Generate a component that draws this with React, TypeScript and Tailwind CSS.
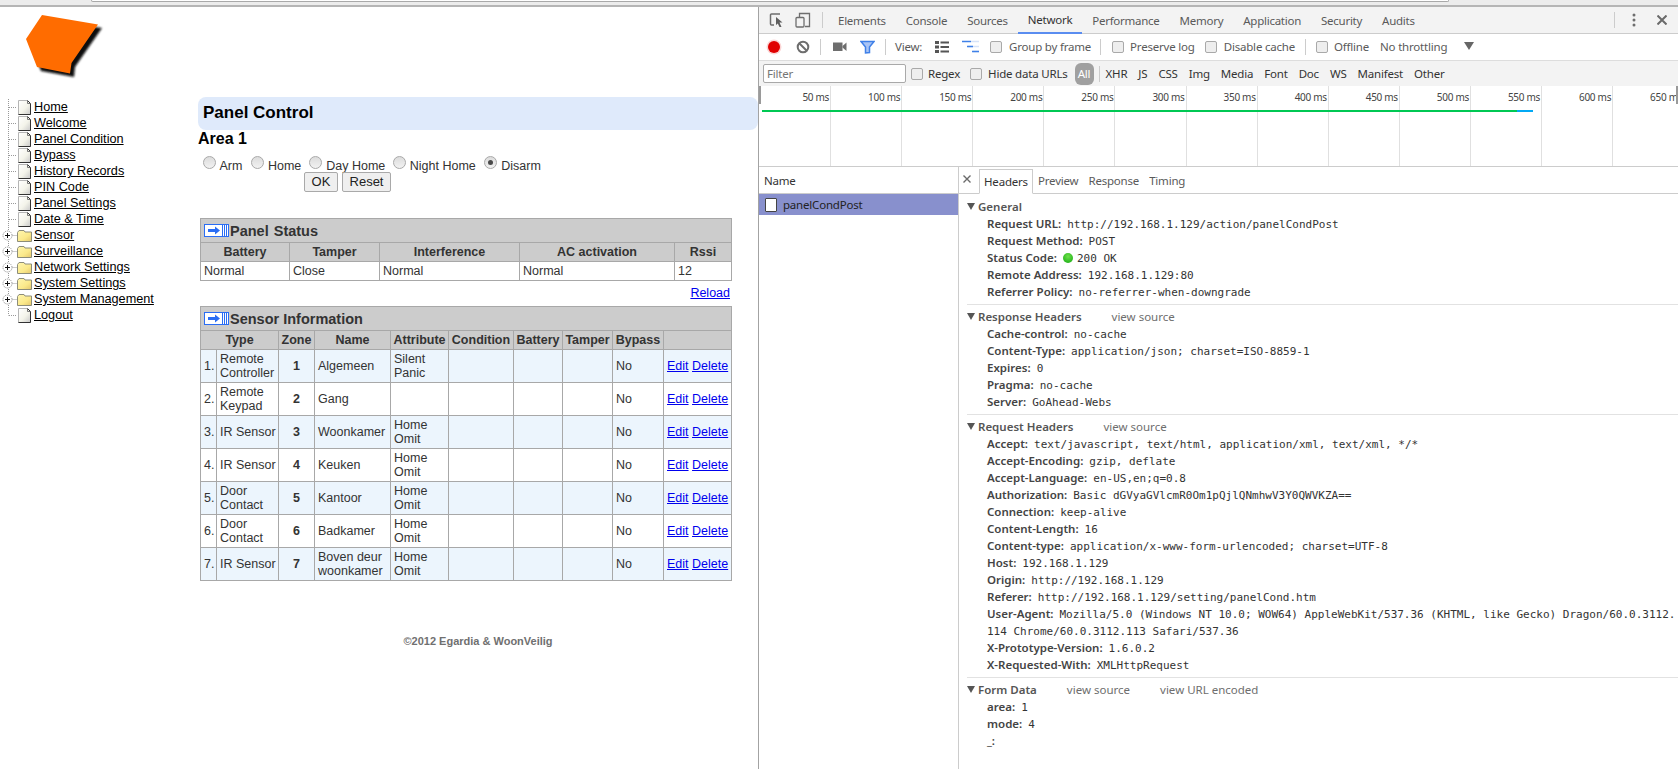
import type { ReactNode } from 'react';

const navItems = [
  { label: 'Home', type: 'page' },
  { label: 'Welcome', type: 'page' },
  { label: 'Panel Condition', type: 'page' },
  { label: 'Bypass', type: 'page' },
  { label: 'History Records', type: 'page' },
  { label: 'PIN Code', type: 'page' },
  { label: 'Panel Settings', type: 'page' },
  { label: 'Date & Time', type: 'page' },
  { label: 'Sensor', type: 'folder' },
  { label: 'Surveillance', type: 'folder' },
  { label: 'Network Settings', type: 'folder' },
  { label: 'System Settings', type: 'folder' },
  { label: 'System Management', type: 'folder' },
  { label: 'Logout', type: 'last' },
];

const sensors = [
  { n: '1.', type: ['Remote', 'Controller'], zone: '1', name: ['Algemeen'], attr: ['Silent', 'Panic'] },
  { n: '2.', type: ['Remote', 'Keypad'], zone: '2', name: ['Gang'], attr: [] },
  { n: '3.', type: ['IR Sensor'], zone: '3', name: ['Woonkamer'], attr: ['Home', 'Omit'] },
  { n: '4.', type: ['IR Sensor'], zone: '4', name: ['Keuken'], attr: ['Home', 'Omit'] },
  { n: '5.', type: ['Door', 'Contact'], zone: '5', name: ['Kantoor'], attr: ['Home', 'Omit'] },
  { n: '6.', type: ['Door', 'Contact'], zone: '6', name: ['Badkamer'], attr: ['Home', 'Omit'] },
  { n: '7.', type: ['IR Sensor'], zone: '7', name: ['Boven deur', 'woonkamer'], attr: ['Home', 'Omit'] },
];

const radios = [
  { label: 'Arm', cls: 'ml-[4.5px]' },
  { label: 'Home', cls: 'ml-[8.5px]' },
  { label: 'Day Home', cls: 'ml-[8px]' },
  { label: 'Night Home', cls: 'ml-[7.5px]' },
  { label: 'Disarm', cls: 'ml-[8.5px]', checked: true },
];

const mainTabs = ['Elements', 'Console', 'Sources', 'Network', 'Performance', 'Memory', 'Application', 'Security', 'Audits'];
const typeFilters = ['XHR', 'JS', 'CSS', 'Img', 'Media', 'Font', 'Doc', 'WS', 'Manifest', 'Other'];
const ticks = [50, 100, 150, 200, 250, 300, 350, 400, 450, 500, 550, 600, 650];

function TreeIcon({ type }: { type: string }) {
  return (
    <svg width="34" height="16" viewBox="0 0 34 16" className="shrink-0">
      <defs>
        <linearGradient id="pageFill" x1="0" y1="0" x2="1" y2="1">
          <stop offset="0" stopColor="#ffffff" />
          <stop offset="0.55" stopColor="#f4f4ea" />
          <stop offset="1" stopColor="#c9c9c9" />
        </linearGradient>
        <linearGradient id="folderFill" x1="0" y1="0" x2="1" y2="1">
          <stop offset="0" stopColor="#fff6b0" />
          <stop offset="0.6" stopColor="#fbe98a" />
          <stop offset="1" stopColor="#e3c66e" />
        </linearGradient>
      </defs>
      <path d={type === 'last' ? 'M8.5 0V8.5' : 'M8.5 0V16'} stroke="#999" strokeDasharray="1 1" fill="none" />
      {type === 'folder' ? (
        <>
          <circle cx="7.5" cy="8.5" r="4.5" fill="#fff" stroke="#888" strokeDasharray="1 1" />
          <path d="M5 8.5H10M7.5 6V11" stroke="#111" fill="none" />
          <path d="M12.5 8.5H17" stroke="#999" strokeDasharray="1 1" fill="none" />
          <path d="M17.5 5.5L19 3.5H24L25 5H31.5V14.5H17.5Z" fill="url(#folderFill)" stroke="#8d8d7a" />
        </>
      ) : (
        <>
          <path d="M9 8.5H17" stroke="#999" strokeDasharray="1 1" fill="none" />
          <path d="M18.5 1.5H27.5L30.5 4.5V15.5H18.5Z" fill="url(#pageFill)" stroke="#b5b5b5" />
          <path d="M27.5 1.5L30.5 4.5V15.5H18.5" fill="none" stroke="#333" />
          <path d="M27.5 1.5V4.5H30.5" fill="none" stroke="#777" />
        </>
      )}
    </svg>
  );
}

function ArrowBadge() {
  return (
    <svg width="25" height="14" viewBox="0 0 25 14" className="shrink-0">
      <rect x="0.5" y="0.5" width="24" height="12" fill="#fff" stroke="#2a6df4" />
      <path d="M4 5H11V2.5L16 6.5L11 10.5V8H4Z" fill="#2a6df4" />
      <path d="M18.5 1V12.5M20.5 1V12.5M22.5 1V12.5" stroke="#2a6df4" />
    </svg>
  );
}

function Radio({ checked }: { checked?: boolean }) {
  return (
    <span className="flex h-[13px] w-[13px] shrink-0 -translate-y-[4px] items-center justify-center rounded-full border border-[#a9a9a9] bg-gradient-to-b from-[#dcdcdc] to-[#f2f2f2]">
      {checked && <span className="h-[5px] w-[5px] rounded-full bg-[#4a4a4a]" />}
    </span>
  );
}

function TitleRow({ cols, title }: { cols: number; title: ReactNode }) {
  return (
    <tr className="h-[24px] bg-[#cccccc]">
      <td colSpan={cols} className="border border-[#a8a8a8] pl-[3px]">
        <div className="flex items-center text-[14.5px] font-bold leading-[18px] text-[#333]">
          <ArrowBadge />
          <span className="ml-[1px] whitespace-pre">{title}</span>
        </div>
      </td>
    </tr>
  );
}

function Lines({ items }: { items: string[] }) {
  return (
    <>
      {items.map((line) => (
        <div key={line}>{line}</div>
      ))}
    </>
  );
}

function PagePane() {
  const th = 'border border-[#a8a8a8] text-center font-bold';
  const td = 'border border-[#a8a8a8] pl-[3px] align-middle';

  return (
    <main className="flex w-[758px] shrink-0 flex-col bg-white font-['Liberation_Sans',Arial,sans-serif] text-[12.5px] text-[#333]">
      <div className="h-[90px] pl-[24px] pt-[6px]">
        <svg width="84" height="72" viewBox="24 13 84 72">
          <defs>
            <filter id="logoBlur" x="-20%" y="-20%" width="140%" height="140%">
              <feGaussianBlur stdDeviation="1" />
            </filter>
          </defs>
          <polygon points="46,19 102,28 75,67 74,77 41,71 30,43" fill="#111" filter="url(#logoBlur)" />
          <polygon points="42,15 98,24.5 71.5,63 70,73.5 37,67 26,39" fill="#ff6c00" />
        </svg>
      </div>

      <div className="flex flex-1">
        <nav className="w-[198px] shrink-0 pt-[2px] text-[12.7px] leading-[16px] text-black">
          {navItems.map((item) => (
            <div key={item.label} className="flex h-[16px] items-center whitespace-nowrap">
              <TreeIcon type={item.type} />
              <a className="underline">{item.label}</a>
            </div>
          ))}
        </nav>

        <div className="flex-1">
          <h1 className="h-[33px] rounded-[8px] bg-[#dfeafb] pl-[5px] text-[17px] font-bold leading-[31px] text-black">Panel Control</h1>
          <h2 className="h-[18px] text-[16px] font-bold leading-[17px] text-black">Area 1</h2>

          <div className="flex h-[26px] items-end leading-[16px]">
            {radios.map((r) => (
              <label key={r.label} className={`flex items-center gap-[4px] ${r.cls}`}>
                <Radio checked={r.checked} />
                {r.label}
              </label>
            ))}
          </div>

          <div className="-mt-[2px] flex h-[20px] gap-[4px] pl-[106px]">
            <button className="h-[20px] w-[34px] rounded-[2px] border border-[#a9a9a9] bg-[#efefef] text-[13px] leading-[16px] text-[#222]">OK</button>
            <button className="h-[20px] w-[49px] rounded-[2px] border border-[#a9a9a9] bg-[#efefef] text-[13px] leading-[16px] text-[#222]">Reset</button>
          </div>

          <div className="ml-[2px] mt-[26px] w-[531px]">
            <table className="w-full table-fixed border-collapse leading-[14px]">
              <colgroup>
                <col className="w-[89px]" />
                <col className="w-[90px]" />
                <col className="w-[140px]" />
                <col className="w-[155px]" />
                <col className="w-[57px]" />
              </colgroup>
              <tbody>
                <TitleRow cols={5} title={<span className="[word-spacing:1px]">Panel Status</span>} />
                <tr className="h-[19px] bg-[#cccccc]">
                  {['Battery', 'Tamper', 'Interference', 'AC activation', 'Rssi'].map((h) => (
                    <td key={h} className={th}>{h}</td>
                  ))}
                </tr>
                <tr className="h-[19px] bg-white">
                  {['Normal', 'Close', 'Normal', 'Normal', '12'].map((v, i) => (
                    <td key={i} className={td}>{v}</td>
                  ))}
                </tr>
              </tbody>
            </table>

            <div className="flex h-[25px] items-center justify-end pb-[1px] pr-[1px]">
              <a className="text-[#0000ee] underline">Reload</a>
            </div>

            <table className="w-full table-fixed border-collapse leading-[14px]">
              <colgroup>
                <col className="w-[16px]" />
                <col className="w-[62px]" />
                <col className="w-[36px]" />
                <col className="w-[76px]" />
                <col className="w-[58px]" />
                <col className="w-[65px]" />
                <col className="w-[49px]" />
                <col className="w-[50px]" />
                <col className="w-[51px]" />
                <col className="w-[68px]" />
              </colgroup>
              <tbody>
                <TitleRow cols={10} title="Sensor Information" />
                <tr className="h-[19px] bg-[#cccccc]">
                  <td colSpan={2} className={th}>Type</td>
                  {['Zone', 'Name', 'Attribute', 'Condition', 'Battery', 'Tamper', 'Bypass', ''].map((h) => (
                    <td key={h} className={th}>{h}</td>
                  ))}
                </tr>
                {sensors.map((s, i) => (
                  <tr key={s.n} className={`h-[33px] ${i % 2 === 0 ? 'bg-[#ecf5fd]' : 'bg-white'}`}>
                    <td className={td}>{s.n}</td>
                    <td className={`${td} whitespace-nowrap`}><Lines items={s.type} /></td>
                    <td className="border border-[#a8a8a8] text-center font-bold">{s.zone}</td>
                    <td className={`${td} whitespace-nowrap`}><Lines items={s.name} /></td>
                    <td className={td}><Lines items={s.attr} /></td>
                    <td className={td} />
                    <td className={td} />
                    <td className={td} />
                    <td className={td}>No</td>
                    <td className={`${td} whitespace-nowrap text-[#0000ee]`}>
                      <a className="underline">Edit</a> <a className="underline">Delete</a>
                    </td>
                  </tr>
                ))}
              </tbody>
            </table>

            <p className="mt-[53px] pl-[25px] text-center text-[11px] font-bold leading-[14px] text-[#707070]">©2012 Egardia &amp; WoonVeilig</p>
          </div>
        </div>
      </div>
    </main>
  );
}

function Check({ className = '' }: { className?: string }) {
  return <span className={`h-[12px] w-[12px] shrink-0 rounded-[2px] border border-[#a9a9a9] bg-[#eeeeee] ${className}`} />;
}

function Sep({ className = '' }: { className?: string }) {
  return <span className={`h-[16px] w-px shrink-0 bg-[#cccccc] ${className}`} />;
}

function ToolbarIcon({ width, children, className = '' }: { width: number; children: ReactNode; className?: string }) {
  return (
    <svg width={width} height="16" viewBox={`0 0 ${width} 16`} className={`shrink-0 ${className}`}>
      {children}
    </svg>
  );
}

function TabBar() {
  return (
    <div className="flex h-[27px] shrink-0 items-center border-b border-[#cccccc] bg-[#f3f3f3] pl-[10px] pr-[11px] tracking-[-0.26px]">
      <ToolbarIcon width={14}>
        <path d="M11 2H2.5A1 1 0 0 0 1.500 3V12A1 1 0 0 0 2.500 13H5" fill="none" stroke="#6e6e6e" strokeWidth="1.500" />
        <path d="M7 5L13.500 10.500H10.500L12.500 15H10.500L8.800 11.500L7 13Z" fill="#5f5f5f" />
      </ToolbarIcon>
      <ToolbarIcon width={16} className="ml-[12px]">
        <path d="M4.500 5V1.500H14.500V14.500H10" fill="none" stroke="#6e6e6e" strokeWidth="1.300" />
        <rect x="1" y="5.500" width="8" height="9.500" rx="1" fill="none" stroke="#6e6e6e" strokeWidth="1.300" />
      </ToolbarIcon>
      <Sep className="ml-[11px]" />
      <div className="ml-[5px] flex h-full">
        {mainTabs.map((tab) => (
          <span
            key={tab}
            className={`flex h-[27px] items-center whitespace-nowrap px-[10px] ${tab === 'Network' ? 'border-b-2 border-[#5a8df0] text-[#333]' : 'text-[#5a5a5a]'}`}
          >
            {tab}
          </span>
        ))}
      </div>
      <Sep className="ml-auto" />
      <svg width="4" height="14" viewBox="0 0 4 14" className="ml-[17px]">
        <circle cx="2" cy="2" r="1.500" fill="#6e6e6e" />
        <circle cx="2" cy="7" r="1.500" fill="#6e6e6e" />
        <circle cx="2" cy="12" r="1.500" fill="#6e6e6e" />
      </svg>
      <svg width="10" height="10" viewBox="0 0 10 10" className="ml-[21px]">
        <path d="M0.500 0.500L9.500 9.500M9.500 0.500L0.500 9.500" stroke="#6a6a6a" strokeWidth="2" />
      </svg>
    </div>
  );
}

function ControlBar() {
  return (
    <div className="flex h-[27px] shrink-0 items-center border-b border-[#dddddd] bg-white pl-[7px] text-[#5a5a5a]">
      <ToolbarIcon width={16}>
        <circle cx="8" cy="8" r="7.500" fill="#fbd5d5" />
        <circle cx="8" cy="8" r="6" fill="#e00000" />
      </ToolbarIcon>
      <ToolbarIcon width={14} className="ml-[14px]">
        <circle cx="7" cy="8" r="5.300" fill="none" stroke="#6e6e6e" strokeWidth="2" />
        <path d="M3.500 4.500L10.500 11.500" stroke="#6e6e6e" strokeWidth="2" />
      </ToolbarIcon>
      <Sep className="ml-[10px]" />
      <ToolbarIcon width={14} className="ml-[12px]">
        <rect x="0" y="3.500" width="9.500" height="8.500" fill="#6e6e6e" />
        <path d="M9.500 7L13.500 3.500V12L9.500 8.500Z" fill="#6e6e6e" />
      </ToolbarIcon>
      <ToolbarIcon width={15} className="ml-[13px]">
        <path d="M1 2.500H14L9.500 8V13.500L5.500 14V8Z" fill="#a9c4f5" stroke="#3f80e8" strokeWidth="1.500" />
      </ToolbarIcon>
      <Sep className="ml-[10px]" />
      <span className="ml-[9px] w-[30px] whitespace-nowrap">View:</span>
      <ToolbarIcon width={14} className="ml-[10px]">
        <path d="M0 2H4V5H0ZM0 6.500H4V9.500H0ZM0 11H4V14H0ZM5.500 2.500H14V4.500H5.500ZM5.500 7H14V9H5.500ZM5.500 11.500H14V13.500H5.500Z" fill="#555" />
      </ToolbarIcon>
      <ToolbarIcon width={17} className="ml-[13px]">
        <path d="M0 2.500H9" stroke="#3f80e8" strokeWidth="1.500" />
        <path d="M9 2.500H17M6 7.500H17M11 12.500H17" stroke="#d6e3f8" strokeWidth="1.500" />
        <path d="M5 7.500H11M10 12.500H17" stroke="#3f80e8" strokeWidth="1.500" />
      </ToolbarIcon>
      <Check className="ml-[11px]" />
      <span className="ml-[7px] whitespace-nowrap">Group by frame</span>
      <Sep className="ml-[9px]" />
      <Check className="ml-[11px]" />
      <span className="ml-[6px] whitespace-nowrap">Preserve log</span>
      <Check className="ml-[10px]" />
      <span className="ml-[7px] whitespace-nowrap">Disable cache</span>
      <Sep className="ml-[10px]" />
      <Check className="ml-[10px]" />
      <span className="ml-[6px] whitespace-nowrap">Offline</span>
      <span className="ml-[11px] whitespace-nowrap">No throttling</span>
      <svg width="10" height="8" viewBox="0 0 10 8" className="mb-[3px] ml-[17px]">
        <path d="M0 0H10L5 8Z" fill="#666" />
      </svg>
    </div>
  );
}

function FilterBar() {
  return (
    <div className="flex h-[25px] shrink-0 items-center bg-[#f3f3f3] pl-[4px] text-[#333]">
      <div className="flex h-[19px] w-[143px] shrink-0 items-center rounded-[2px] border border-[#a9a9a9] bg-white pl-[3px] text-[#757575]">Filter</div>
      <Check className="ml-[5px]" />
      <span className="ml-[5px] whitespace-nowrap">Regex</span>
      <Check className="ml-[10px]" />
      <span className="ml-[6px] whitespace-nowrap">Hide data URLs</span>
      <span className="ml-[7px] flex h-[22px] w-[19px] shrink-0 items-center justify-center rounded-[6px] bg-[#a0a0a0] text-white">All</span>
      <Sep className="ml-[5px]" />
      <div className="ml-[6px] flex gap-[11px] whitespace-nowrap">
        {typeFilters.map((f) => (
          <span key={f}>{f}</span>
        ))}
      </div>
    </div>
  );
}

function Timeline() {
  return (
    <div className="relative flex h-[81px] shrink-0 overflow-hidden border-b border-[#cccccc] bg-white pl-[1px] text-[10px] leading-[22px] tracking-[-0.3px] text-[#444]">
      {ticks.map((t) => (
        <div key={t} className="h-full w-[71.1px] shrink-0 border-r border-[#e0e0e0] pr-[1px] text-right whitespace-nowrap">
          {t} ms
        </div>
      ))}
      {/* request bar sits over the grid */}
      <div className="absolute left-[3px] top-[24px] h-[2px] w-[755px] bg-[#00c853]" />
      <div className="absolute left-[758px] top-[24px] h-[2px] w-[16px] bg-[#03a9f4]" />
      <div className="absolute left-0 top-0 h-[18px] w-[2px] bg-[#9a9a9a]" />
      <div className="absolute right-0 top-0 h-[18px] w-[2px] bg-[#9a9a9a]" />
    </div>
  );
}

function Row({ name, children }: { name: string; children: ReactNode }) {
  return (
    <div className="whitespace-nowrap pl-[20px] leading-[17px]">
      <span className="mr-[6px] font-semibold text-[#444]">{name}</span>
      <span className="font-['DejaVu_Sans_Mono',monospace] text-[11px] leading-[14px] text-[#333]">{children}</span>
    </div>
  );
}

function Section({ title, links = [], last, children }: { title: string; links?: string[]; last?: boolean; children: ReactNode }) {
  return (
    <section className={`ml-[8px] pb-[4px] pt-[3px] tracking-normal ${last ? '' : 'border-b border-[#e2e2e2]'}`}>
      <div className="flex h-[17px] items-center whitespace-nowrap">
        <svg width="8" height="7" viewBox="0 0 8 7" className="shrink-0">
          <path d="M0 0H8L4 7Z" fill="#555" />
        </svg>
        <span className="ml-[3px] font-semibold text-[#555]">{title}</span>
        {links.map((l) => (
          <span key={l} className="ml-[30px] text-[#6e6e6e]">{l}</span>
        ))}
      </div>
      {children}
    </section>
  );
}

function Details() {
  return (
    <div className="min-w-0 flex-1 overflow-hidden">
      <div className="flex h-[27px] items-end border-b border-[#cccccc] pl-[4px]">
        <svg width="8" height="8" viewBox="0 0 8 8" className="mb-[10px] shrink-0">
          <path d="M0.500 0.500L7.500 7.500M7.500 0.500L0.500 7.500" stroke="#6a6a6a" strokeWidth="1.400" />
        </svg>
        <span className="-mb-px ml-[8px] flex h-[25px] w-[54px] items-center justify-center border border-b-white border-[#cccccc] bg-white pt-px text-[#333]">Headers</span>
        <div className="ml-[5px] flex h-[25px] items-center gap-[10px] pt-px text-[#5a5a5a]">
          <span>Preview</span>
          <span>Response</span>
          <span>Timing</span>
        </div>
      </div>
      <div className="pt-[1px]">
        <Section title="General">
          <Row name="Request URL:">http://192.168.1.129/action/panelCondPost</Row>
          <Row name="Request Method:">POST</Row>
          <Row name="Status Code:">
            <span className="mr-[4px] inline-block h-[10px] w-[10px] translate-y-[1px] rounded-full bg-[radial-gradient(circle_at_50%_35%,#6fe04a,#0fa80f)]" />
            200 OK
          </Row>
          <Row name="Remote Address:">192.168.1.129:80</Row>
          <Row name="Referrer Policy:">no-referrer-when-downgrade</Row>
        </Section>
        <Section title="Response Headers" links={['view source']}>
          <Row name="Cache-control:">no-cache</Row>
          <Row name="Content-Type:">application/json; charset=ISO-8859-1</Row>
          <Row name="Expires:">0</Row>
          <Row name="Pragma:">no-cache</Row>
          <Row name="Server:">GoAhead-Webs</Row>
        </Section>
        <Section title="Request Headers" links={['view source']}>
          <Row name="Accept:">text/javascript, text/html, application/xml, text/xml, */*</Row>
          <Row name="Accept-Encoding:">gzip, deflate</Row>
          <Row name="Accept-Language:">en-US,en;q=0.8</Row>
          <Row name="Authorization:">Basic dGVyaGVlcmR0Om1pQjlQNmhwV3Y0QWVKZA==</Row>
          <Row name="Connection:">keep-alive</Row>
          <Row name="Content-Length:">16</Row>
          <Row name="Content-type:">application/x-www-form-urlencoded; charset=UTF-8</Row>
          <Row name="Host:">192.168.1.129</Row>
          <Row name="Origin:">http://192.168.1.129</Row>
          <Row name="Referer:">http://192.168.1.129/setting/panelCond.htm</Row>
          <Row name="User-Agent:">
            Mozilla/5.0 (Windows NT 10.0; WOW64) AppleWebKit/537.36 (KHTML, like Gecko) Dragon/60.0.3112.
            <br />
            114 Chrome/60.0.3112.113 Safari/537.36
          </Row>
          <Row name="X-Prototype-Version:">1.6.0.2</Row>
          <Row name="X-Requested-With:">XMLHttpRequest</Row>
        </Section>
        <Section title="Form Data" links={['view source', 'view URL encoded']} last>
          <Row name="area:">1</Row>
          <Row name="mode:">4</Row>
          <Row name="_:">{''}</Row>
        </Section>
      </div>
    </div>
  );
}

function DevTools() {
  return (
    <aside className="flex min-w-0 flex-1 flex-col border-l border-[#a3a3a3] bg-white font-['Noto_Sans',sans-serif] text-[11.5px] tracking-[-0.2px]">
      <TabBar />
      <ControlBar />
      <FilterBar />
      <Timeline />
      <div className="flex min-h-0 flex-1">
        <div className="w-[200px] shrink-0 border-r border-[#cccccc]">
          <div className="flex h-[27px] items-center border-b border-[#cccccc] pl-[5px] pt-px text-[#333]">Name</div>
          <div className="flex h-[21px] items-center bg-[#8890cd] pl-[6px] text-[#222]">
            <span className="h-[14px] w-[12px] rounded-[1px] border border-[#444] bg-white" />
            <span className="ml-[6px]">panelCondPost</span>
          </div>
        </div>
        <Details />
      </div>
    </aside>
  );
}

export default function App() {
  return (
    <div className="flex h-[769px] w-[1678px] flex-col overflow-hidden bg-white">
      <div className="h-[7px] shrink-0 border-b-2 border-[#b5b5b5] bg-[#ececec] pl-[91px]">
        <div className="h-[2px] w-[1358px] rounded-b-[2px] border-b border-x border-[#a9a9a9] bg-white" />
      </div>
      <div className="flex min-h-0 flex-1">
        <PagePane />
        <DevTools />
      </div>
    </div>
  );
}
